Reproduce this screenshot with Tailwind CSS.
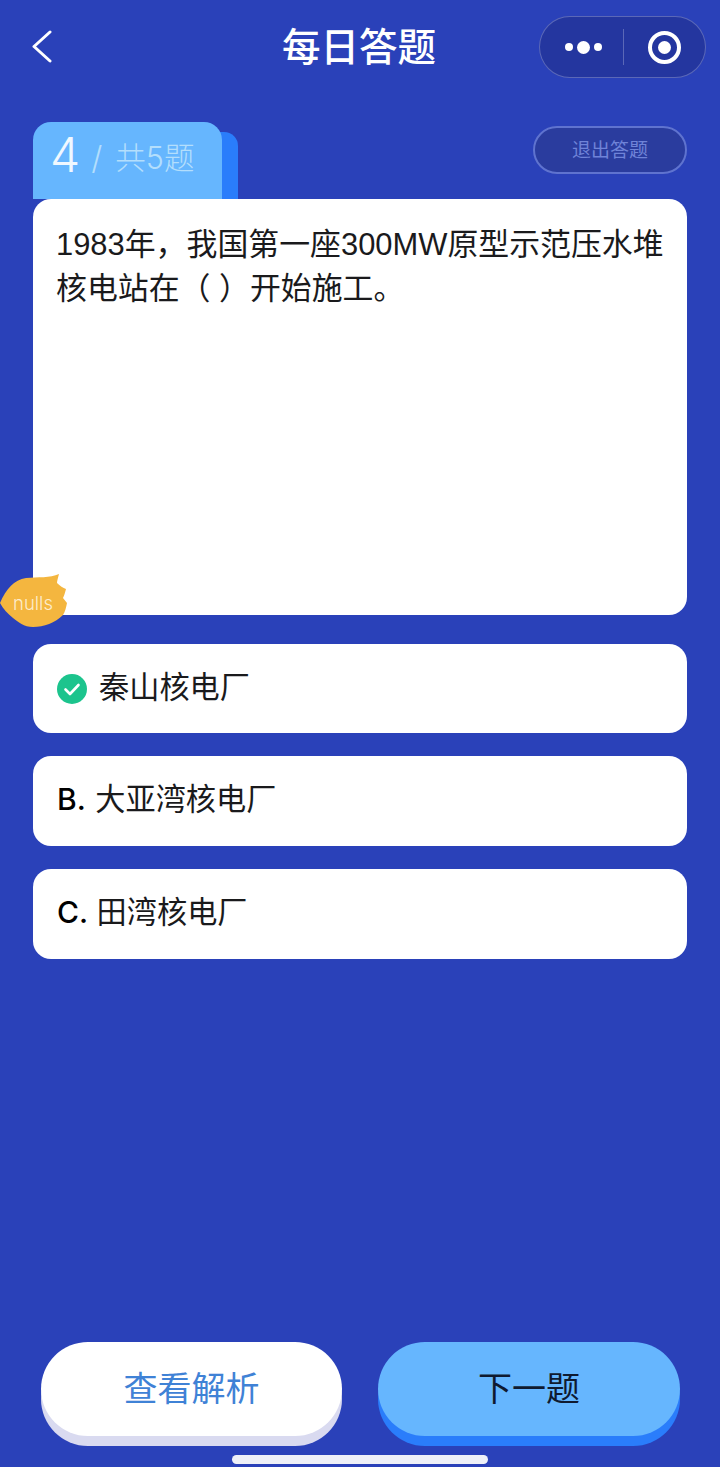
<!DOCTYPE html>
<html lang="zh-CN">
<head>
  <meta charset="UTF-8">
  <meta name="viewport" content="width=device-width, initial-scale=1.0">
  <title>每日答题</title>
  <script src="https://cdn.jsdelivr.net/npm/@tailwindcss/browser@4"></script>
</head>
<body class="bg-[#2a41b9] font-['Inter','Noto_Sans_CJK_SC',sans-serif] overflow-hidden">
  <div class="h-[1467px] w-[720px] flex flex-col">

    <!-- nav -->
    <header class="relative h-[122px] shrink-0 flex items-start justify-between pl-[32px] pr-[14px] pt-[16px]">
      <svg class="mt-[14px]" width="20" height="34" viewBox="0 0 20 34" fill="none">
        <path d="M18 2 L2 16.5 L18 31" stroke="white" stroke-width="3" stroke-linecap="round" stroke-linejoin="round"/>
      </svg>
      <h1 class="absolute left-[282px] top-[24px] text-[38.5px] leading-[46px] font-medium text-white">每日答题</h1>
      <div class="w-[167px] h-[62px] rounded-full border border-white/25 bg-[#24369f] flex items-center">
        <div class="w-[83px] flex items-center justify-center gap-[4px] pl-[3px]">
          <span class="w-[8px] h-[8px] rounded-full bg-white"></span>
          <span class="w-[13px] h-[13px] rounded-full bg-white"></span>
          <span class="w-[8px] h-[8px] rounded-full bg-white"></span>
        </div>
        <div class="w-px h-[36px] bg-white/25"></div>
        <div class="flex-1 flex items-center justify-center">
          <div class="w-[33px] h-[33px] rounded-full border-[4px] border-white flex items-center justify-center">
            <span class="w-[13px] h-[13px] rounded-full bg-white"></span>
          </div>
        </div>
      </div>
    </header>

    <main class="px-[33px]">
      <!-- question counter + quit -->
      <div class="flex items-start justify-between h-[77px]">
        <div class="relative w-[205px] h-[77px]">
          <div class="absolute right-0 top-[10px] w-[40px] h-[67px] rounded-t-[14px] bg-[#2a7dfb]"></div>
          <div class="absolute left-0 top-0 w-[189px] h-[77px] rounded-t-[18px] bg-[#66b6fe] flex items-start pl-[17px] pt-[5px] text-[#b3defc]">
            <span class="text-[48px] leading-[56px] text-white/90 font-light">4</span>
            <span class="text-[32px] leading-[36px] font-light ml-[11px] mt-[13px]">/</span>
            <span class="text-[30.5px] leading-[36px] font-light ml-[13px] mt-[13px]">共5题</span>
          </div>
        </div>
        <button class="mt-[4px] w-[154px] h-[48px] rounded-full border-2 border-[#5f73cf] bg-[#2a3c9e] text-[#6f83d8] text-[19px] leading-none">退出答题</button>
      </div>

      <!-- question -->
      <section class="relative h-[416px] bg-white rounded-[18px] px-[23px] pt-[24px] text-[30.9px] leading-[44px] text-[#1a1a1c] font-['Liberation_Sans','Noto_Sans_CJK_SC',sans-serif]">
        <p class="whitespace-nowrap">1983年，我国第一座300MW原型示范压水堆<br>核电站在（ ）开始施工。</p>
        <div class="absolute -left-[33px] top-[372px] w-[68px] h-[58px]">
          <svg class="absolute inset-0" width="68" height="58" viewBox="0 0 68 58">
            <path d="M0 32 C6 18 14 9 26 7 C38 6 50 7 59 3 C58 7 57 10 57 12 C60 15 63 17 66 18 C65 22 64 25 63 27 L67 32 C66 37 65 41 63 44 C55 52 44 56 33 56 C24 56 18 51 13 47 C8 43 3 38 0 32 Z" fill="#f4b63f"/>
          </svg>
          <span class="absolute left-[13px] top-[22px] text-[18.5px] leading-[20px] font-['Inter'] font-light text-[#fdeccb]">nulls</span>
        </div>
      </section>

      <!-- options -->
      <ul class="mt-[29px] flex flex-col gap-[23px] text-[30.2px] text-[#1a1a1c]">
        <li class="h-[89px] bg-white rounded-[18px] flex items-center pl-[24px]">
          <svg class="mr-[12px]" width="30" height="30" viewBox="0 0 30 30">
            <circle cx="15" cy="15" r="15" fill="#1cc48d"/>
            <path d="M8.5 15.5 L13 20 L21.5 11" fill="none" stroke="white" stroke-width="2.6" stroke-linecap="round" stroke-linejoin="round"/>
          </svg>
          <span class="relative -top-[1px]">秦山核电厂</span>
        </li>
        <li class="h-[90px] bg-white rounded-[18px] flex items-center pl-[24px]">
          <span class="relative -top-[1px]"><span class="text-[30px] font-medium text-black mr-[1px]">B.</span> 大亚湾核电厂</span>
        </li>
        <li class="h-[90px] bg-white rounded-[18px] flex items-center pl-[24px]">
          <span class="relative -top-[1px]"><span class="text-[30px] font-medium text-black">C.</span> 田湾核电厂</span>
        </li>
      </ul>
    </main>

    <!-- bottom actions -->
    <footer class="mt-auto">
      <div class="flex justify-between pl-[41px] pr-[40px]">
        <button class="w-[301px] h-[94px] pb-[2px] rounded-full bg-white shadow-[0_10px_0_#d9daf0] text-[34px] text-[#3f82d6]">查看解析</button>
        <button class="w-[302px] h-[94px] pb-[2px] rounded-full bg-[#66b6fe] shadow-[0_10px_0_#2a7dfb] text-[34px] text-[#0f1a30]">下一题</button>
      </div>
      <div class="mt-[19px] mb-[3px] mx-auto w-[256px] h-[9px] rounded-full bg-[#eef0f8]"></div>
    </footer>
  </div>
</body>
</html>
